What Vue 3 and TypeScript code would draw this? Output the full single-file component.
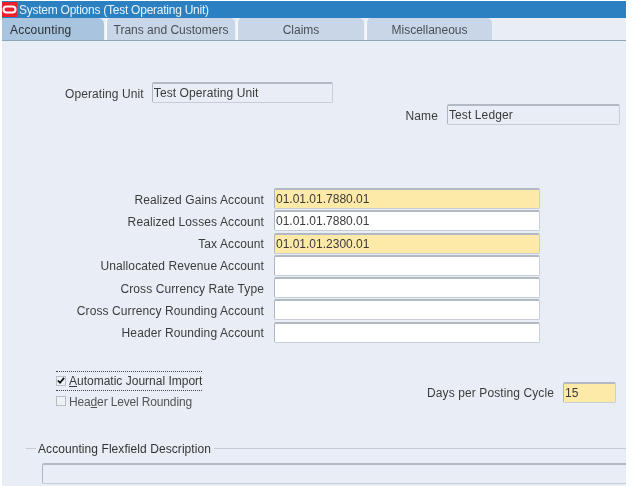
<script setup lang="ts">
interface Field { label: string; value: string; required: boolean }
const tabs: string[] = ['Trans and Customers', 'Claims', 'Miscellaneous']
const fields: Field[] = [
  { label: 'Realized Gains Account', value: '01.01.01.7880.01', required: true },
  { label: 'Realized Losses Account', value: '01.01.01.7880.01', required: false },
  { label: 'Tax Account', value: '01.01.01.2300.01', required: true },
  { label: 'Unallocated Revenue Account', value: '', required: false },
  { label: 'Cross Currency Rate Type', value: '', required: false },
  { label: 'Cross Currency Rounding Account', value: '', required: false },
  { label: 'Header Rounding Account', value: '', required: false },
]
</script>

<template>
  <div class="page">
    <div class="window">
      <header class="titlebar">
        <span class="logo"><svg width="15" height="9" viewBox="0 0 15 9"><rect x="1.5" y="1.5" width="12" height="6" rx="3" fill="none" stroke="#fff" stroke-width="2" /></svg></span>
        <span>System Options (Test Operating Unit)</span>
      </header>
      <nav class="tabs">
        <div class="tab active">Accounting</div>
        <div v-for="t in tabs" :key="t" class="tab" :class="'tab-' + t.slice(0, 2)">{{ t }}</div>
      </nav>
      <main class="body">
        <div class="unit-row">
          <span class="label">Operating Unit</span>
          <div class="input readonly unit">Test Operating Unit</div>
        </div>
        <div class="name-row">
          <span class="label">Name</span>
          <div class="input readonly ledger">Test Ledger</div>
        </div>
        <div class="grid">
          <template v-for="f in fields" :key="f.label">
            <span class="label grid-label">{{ f.label }}</span>
            <div class="input account" :class="{ required: f.required }">{{ f.value }}</div>
          </template>
        </div>
        <div class="options">
          <div class="checks">
            <div class="check focus">
              <span class="box"><svg width="9" height="9" viewBox="0 0 9 9"><path d="M1 4.5 L3.4 7 L8 1.5" fill="none" stroke="#111" stroke-width="2" /></svg></span>
              <span><u>A</u>utomatic Journal Import</span>
            </div>
            <div class="check second">
              <span class="box"></span>
              <span class="second-text">Hea<u>d</u>er Level Rounding</span>
            </div>
          </div>
          <div class="days">
            <span class="label">Days per Posting Cycle</span>
            <div class="input required cycle">15</div>
          </div>
        </div>
        <div class="legend"><span class="legend-text">Accounting Flexfield Description</span></div>
        <div class="input readonly flex-desc"></div>
      </main>
    </div>
  </div>
</template>

<style>
html, body { margin: 0; background: #fff; }
</style>

<style scoped>
.page {
  width: 633px;
  height: 486px;
  overflow: hidden;
  box-sizing: border-box;
  padding: 1px 7px 0 2px;
  font-family: "Liberation Sans", Arial, sans-serif;
  font-size: 12px;
  letter-spacing: 0.1px;
  color: #3c3c3c;
}
.window {
  height: 485px;
  background: #e9eef6;
  overflow: hidden;
  filter: blur(0.4px);
}
.titlebar {
  height: 17px;
  background: #2a80c0;
  color: #e8f2fa;
  display: flex;
  align-items: center;
  gap: 2px;
  font-size: 12px;
  letter-spacing: -0.25px;
}
.logo {
  width: 15px;
  height: 15px;
  background: #e8212b;
  display: flex;
  align-items: center;
  justify-content: center;
}
.tabs {
  height: 23px;
  display: flex;
  box-sizing: border-box;
  border-bottom: 1px solid #8fa6b8;
  letter-spacing: 0;
}
.tab {
  height: 22px;
  padding-top: 2px;
  background: #c8d6e8;
  color: #4a4f55;
  display: flex;
  align-items: center;
  justify-content: center;
  box-sizing: border-box;
  width: 128px;
  border-left: 2px solid #f4f7fb;
  border-radius: 5px 5px 0 0;
  margin-right: 1px;
}
.tab.active {
  width: 102px;
  background: #a9c4de;
  color: #2c3034;
  border-left: 0;
  justify-content: flex-start;
  padding-left: 8px;
  border-radius: 0 6px 0 0;
  letter-spacing: 0.2px;
}
.tab-Tr { width: 130px; }
.tab-Cl { width: 128px; }
.tab-Mi { width: 127px; }
.label { white-space: nowrap; padding-top: 2px; }
.input {
  box-sizing: border-box;
  height: 21px;
  padding: 0 2px 0 1px;
  display: flex;
  align-items: center;
  border: 1px solid #c9ced6;
  border-top: 2px solid #b3b9c2;
  border-left: 1px solid #aeb5bf;
  border-radius: 2px;
  background: #fff;
  color: #3a3a3a;
  letter-spacing: 0;
}
.readonly { background: #e9eef6; letter-spacing: 0.1px; }
.required { background: #fdeaa8; }
.unit-row {
  display: flex;
  align-items: center;
  gap: 8px;
  padding: 41px 0 0 63px;
}
.unit { width: 181px; }
.name-row {
  display: flex;
  align-items: center;
  justify-content: flex-end;
  gap: 9px;
  padding: 1px 6px 0 0;
}
.ledger { width: 173px; }
.grid {
  display: grid;
  grid-template-columns: 262px 266px;
  column-gap: 10px;
  row-gap: 1.3px;
  align-items: center;
  margin-top: 63px;
}
.grid-label { text-align: right; }
.account { width: 266px; }
.options {
  display: flex;
  justify-content: space-between;
  align-items: flex-start;
  margin-top: 28px;
  padding: 0 10px 0 54px;
}
.checks { display: flex; flex-direction: column; letter-spacing: 0; }
.check {
  display: flex;
  align-items: center;
  gap: 3px;
  height: 20px;
  box-sizing: border-box;
  color: #555;
}
.check.focus {
  color: #3a3a3a;
  border-top: 1px dotted #444;
  border-bottom: 1px dotted #444;
}
.second-text { letter-spacing: -0.15px; padding-top: 3px; }
.box {
  width: 10px;
  height: 10px;
  box-sizing: border-box;
  border: 1px solid #b9bec6;
  background: #eef1f6;
  display: flex;
  align-items: center;
  justify-content: center;
}
.days {
  display: flex;
  align-items: center;
  gap: 9px;
  margin-top: 11px;
}
.cycle { width: 53px; }
.legend {
  display: flex;
  align-items: center;
  margin-top: 31px;
  padding-left: 24px;
  letter-spacing: 0.07px;
}
.legend::before {
  content: "";
  width: 10px;
  height: 1px;
  background: #c3cbd6;
}
.legend::after {
  content: "";
  flex: 1;
  height: 1px;
  background: #c3cbd6;
}
.legend-text { padding: 0 3px 0 2px; color: #333; }
.flex-desc { width: 590px; margin: 7px 0 0 40px; height: 21px; }
</style>
